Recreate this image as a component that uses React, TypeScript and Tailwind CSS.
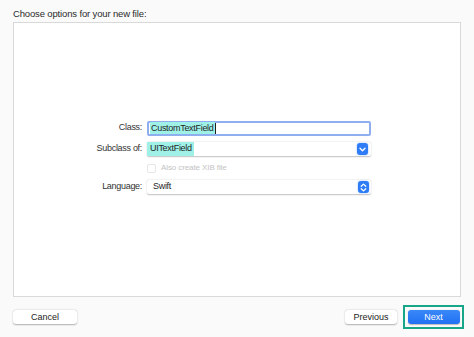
const font = "font-['Helvetica','Liberation_Sans',Arial,sans-serif]";

function BlueStepper({ kind }: { kind: "down" | "updown" }) {
  return (
    <span className="flex h-[12px] w-[11px] items-center justify-center rounded-[3px] bg-[#2f7df6] shadow-[0_0_2px_rgba(47,125,246,0.5)]">
      {kind === "down" ? (
        <svg width="7" height="5" viewBox="0 0 7 5" fill="none">
          <path d="M1 1.2 L3.5 3.7 L6 1.2" stroke="white" strokeWidth="1.3" strokeLinecap="round" strokeLinejoin="round" />
        </svg>
      ) : (
        <svg width="7" height="9" viewBox="0 0 7 9" fill="none">
          <path d="M1.2 3.3 L3.5 1.1 L5.8 3.3 M1.2 5.7 L3.5 7.9 L5.8 5.7" stroke="white" strokeWidth="1.2" strokeLinecap="round" strokeLinejoin="round" />
        </svg>
      )}
    </span>
  );
}

export default function App() {
  return (
    <div className={`${font} flex h-[337px] w-[474px] flex-col bg-[#fafafa] text-[#262626]`}>
      <div className="pl-[13px] pt-[8px] text-[9.5px] leading-[12px] tracking-[-0.15px] text-[#2b2b2b]">Choose options for your new file:</div>

      <div className="ml-[13px] mt-[2px] h-[275px] w-[448px] border border-[#d9d9d9] bg-white">
        <div className="ml-[56px] flex flex-col gap-[7px] pt-[98px] text-[9px] tracking-[-0.3px]">
          <div className="flex h-[14px] items-center">
            <span className="w-[72px] text-right text-[#333]">Class:</span>
            <div className="ml-[5px] flex h-[15px] w-[224px] items-center rounded-[2px] border-2 border-[#8eaef0] bg-white pl-[1px]">
              <span className="bg-[#9ff1e8] px-[1px] leading-[12px] text-[#1f1f1f]">CustomTextField</span>
              <span className="h-[11px] w-px bg-[#1f1f1f]" />
            </div>
          </div>

          <div className="flex h-[14px] items-center">
            <span className="w-[72px] text-right text-[#333]">Subclass of:</span>
            <div className="ml-[5px] flex h-[14px] w-[224px] items-center justify-between rounded-[2px] bg-white pr-[3px] shadow-[0_0.5px_1.5px_rgba(0,0,0,0.25)]">
              <span className="flex h-[14px] items-center bg-[#9ff1e8] pl-[3px] pr-[2px] text-[#1f1f1f]">UITextField</span>
              <BlueStepper kind="down" />
            </div>
          </div>

          <div className="flex h-[10px] items-center pl-[77px]">
            <span className="h-[9px] w-[9px] rounded-[2px] border border-[#e6e6e6] bg-white" />
            <span className="ml-[5px] text-[8px] tracking-[-0.1px] text-[#c3c3c3]">Also create XIB file</span>
          </div>

          <div className="mt-[0px] flex h-[14px] items-center">
            <span className="w-[72px] text-right text-[#333]">Language:</span>
            <div className="ml-[5px] flex h-[14px] w-[224px] items-center justify-between rounded-[2px] bg-white pl-[6px] pr-[2px] shadow-[0_0.5px_1.5px_rgba(0,0,0,0.25)]">
              <span className="text-[#1f1f1f]">Swift</span>
              <BlueStepper kind="updown" />
            </div>
          </div>
        </div>
      </div>

      <div className="mt-[8px] flex items-center pl-[13px] text-[9px]">
        <button className="h-[14px] w-[64px] rounded-[3px] bg-white leading-[14px] text-[#222] shadow-[0_0.5px_1.5px_rgba(0,0,0,0.3)]">
          Cancel
        </button>
        <div className="ml-auto mr-[10px] flex items-center">
          <button className="h-[14px] w-[52px] rounded-[3px] bg-white leading-[14px] text-[#222] shadow-[0_0.5px_1.5px_rgba(0,0,0,0.3)]">
            Previous
          </button>
          <div className="ml-[6px] flex h-[24px] w-[61px] items-center justify-center border-2 border-[#17a689]">
            <button className="h-[14px] w-[52px] rounded-[3px] bg-gradient-to-b from-[#3a88f8] to-[#1f70f3] leading-[14px] text-white shadow-[0_0.5px_1px_rgba(0,0,0,0.25)]">
              Next
            </button>
          </div>
        </div>
      </div>
    </div>
  );
}
